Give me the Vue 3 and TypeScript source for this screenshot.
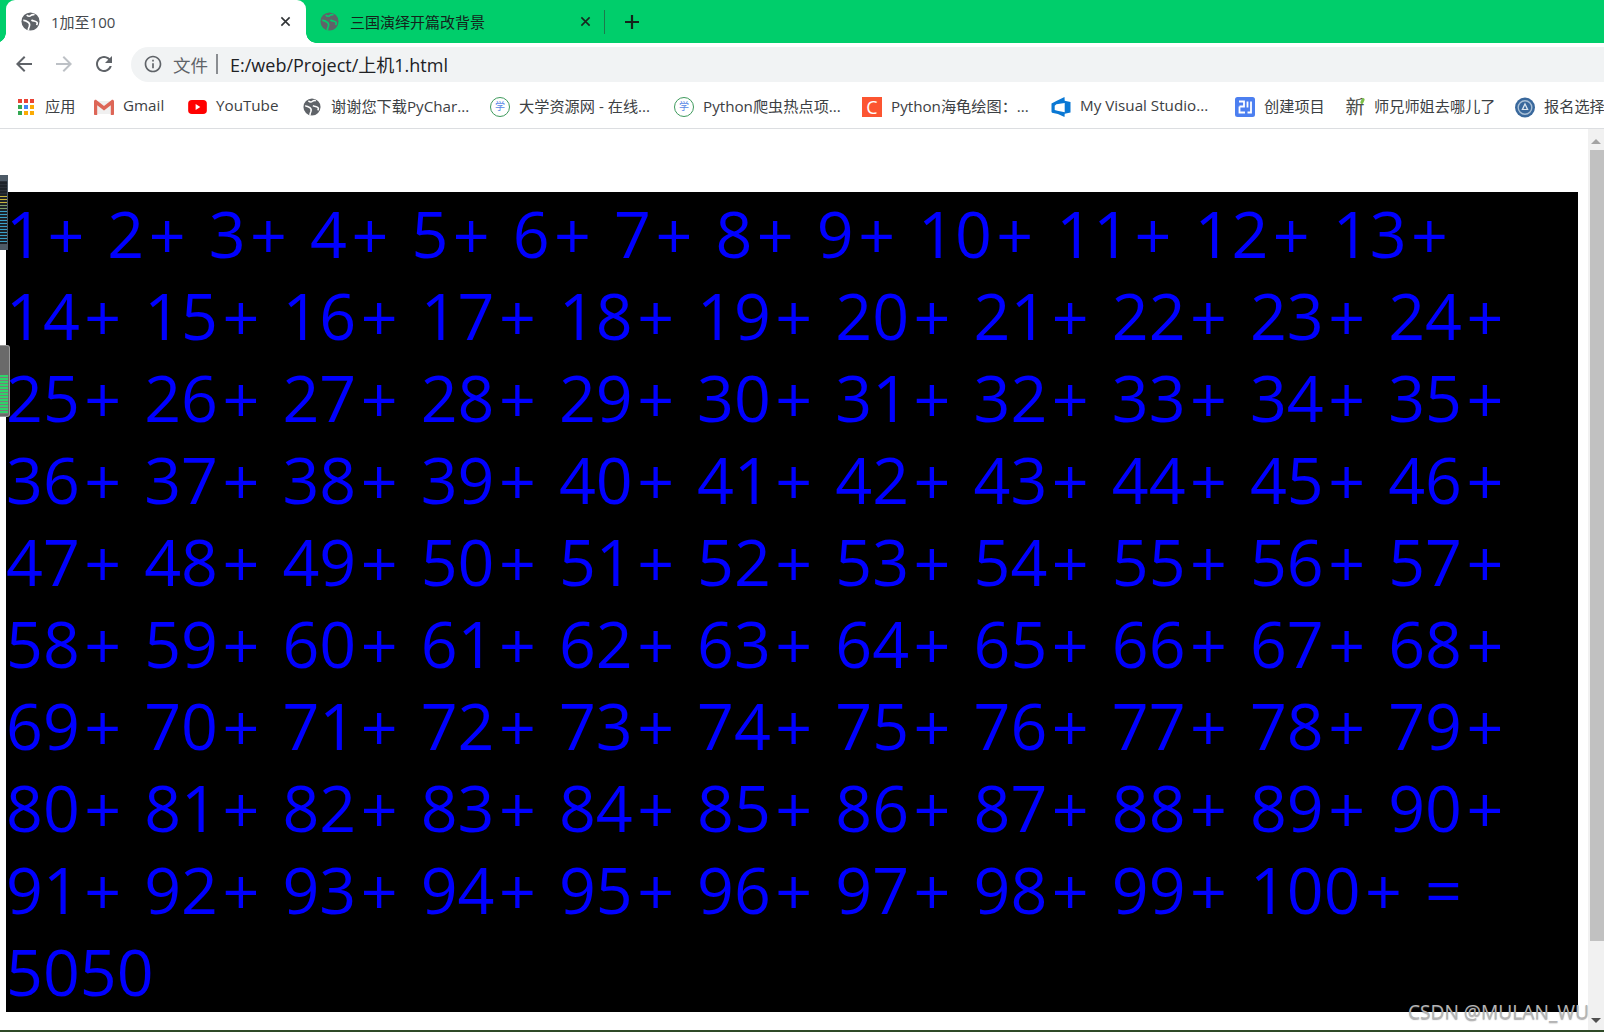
<script setup lang="ts">
import { computed } from 'vue'

interface Bookmark {
  label: string
  icon: string
}

const bookmarks: Bookmark[] = [
  { label: '应用', icon: 'apps' },
  { label: 'Gmail', icon: 'gmail' },
  { label: 'YouTube', icon: 'youtube' },
  { label: '谢谢您下载PyChar...', icon: 'globe' },
  { label: '大学资源网 - 在线...', icon: 'xue' },
  { label: 'Python爬虫热点项...', icon: 'xue' },
  { label: 'Python海龟绘图：...', icon: 'csdn' },
  { label: 'My Visual Studio...', icon: 'vs' },
  { label: '创建项目', icon: 'create' },
  { label: '师兄师姐去哪儿了', icon: 'xin' },
  { label: '报名选择', icon: 'school' },
]

const numbers = Array.from({ length: 100 }, (_, i) => i + 1)
const sum = computed(() => numbers.reduce((a, b) => a + b, 0))

const globePaths = 'M6 3.2C8 5 9.5 4.6 10.5 3.6 11.5 2.8 13 2.6 14.2 3M2.4 8.8C4 8.6 6 9.6 7.6 10.8 9.2 12 9.4 13.4 8.8 15 8.2 16.4 7.6 17.6 7.8 19.2M11 8.4C12.6 9.6 14.6 9.4 16.2 10.4 17.4 11.2 17.2 12.6 16.4 13.8'
</script>

<template>
  <div class="window">
    <header class="tabstrip">
      <div class="tab active">
        <svg class="favicon" viewBox="0 0 20 20"><circle cx="10" cy="10" r="9.5" fill="#5f6368" /><path :d="globePaths" fill="none" stroke="#fff" stroke-width="1.7" /></svg>
        <span class="tab-title">1加至100</span>
        <svg class="close" viewBox="0 0 12 12"><path d="M1.5 1.5l9 9M10.5 1.5l-9 9" stroke="#303336" stroke-width="1.7" /></svg>
      </div>
      <div class="tab idle">
        <svg class="favicon" viewBox="0 0 20 20"><circle cx="10" cy="10" r="9.5" fill="#5f6368" /><path :d="globePaths" fill="none" stroke="#00ce6b" stroke-width="1.7" /></svg>
        <span class="tab-title">三国演绎开篇改背景</span>
        <svg class="close" viewBox="0 0 12 12"><path d="M1.5 1.5l9 9M10.5 1.5l-9 9" stroke="#16281f" stroke-width="1.7" /></svg>
      </div>
      <span class="tab-divider"></span>
      <svg class="new-tab" viewBox="0 0 16 16"><path d="M8 1v14M1 8h14" stroke="#14231b" stroke-width="2.2" /></svg>
    </header>

    <div class="toolbar">
      <svg class="nav" viewBox="0 0 24 24"><path fill="#5f6368" d="M20 11H7.83l5.59-5.59L12 4l-8 8 8 8 1.41-1.41L7.83 13H20v-2z" /></svg>
      <svg class="nav" viewBox="0 0 24 24"><path fill="#bdc1c6" d="M12 4l-1.41 1.41L16.17 11H4v2h12.17l-5.58 5.59L12 20l8-8z" /></svg>
      <svg class="nav" viewBox="0 0 24 24"><path fill="#5f6368" d="M17.65 6.35C16.2 4.9 14.21 4 12 4c-4.42 0-7.99 3.58-7.99 8s3.57 8 7.99 8c3.73 0 6.84-2.55 7.73-6h-2.08c-.82 2.33-3.04 4-5.65 4-3.31 0-6-2.69-6-6s2.69-6 6-6c1.66 0 3.14.69 4.22 1.78L13 11h7V4l-2.35 2.35z" /></svg>
      <div class="omnibox">
        <svg class="info" viewBox="0 0 24 24"><path fill="#5f6368" d="M11 7h2v2h-2zm0 4h2v6h-2zm1-9C6.48 2 2 6.48 2 12s4.48 10 10 10 10-4.48 10-10S17.52 2 12 2zm0 18c-4.41 0-8-3.59-8-8s3.59-8 8-8 8 3.59 8 8-3.59 8-8 8z" /></svg>
        <span class="scheme">文件</span>
        <span class="omni-sep"></span>
        <span class="url">E:/web/Project/上机1.html</span>
      </div>
    </div>

    <nav class="bookmarks">
      <div v-for="b in bookmarks" :key="b.label" class="bookmark">
        <span class="bm-icon">
          <span v-if="b.icon === 'apps'" class="apps">
            <i class="r"></i><i class="r"></i><i class="r"></i>
            <i class="g"></i><i class="b"></i><i class="y"></i>
            <i class="g"></i><i class="y"></i><i class="y"></i>
          </span>
          <svg v-else-if="b.icon === 'gmail'" viewBox="0 0 20 16" width="20" height="16"><path fill="#f0f0f0" d="M1 2h18v13H1z" /><path fill="#dd6657" d="M0 2.5C0 1 1.6.4 2.6 1.2L10 7l7.4-5.8C18.4.4 20 1 20 2.5V15c0 .6-.4 1-1 1h-2.2V6.2L10 11.4 3.2 6.2V16H1c-.6 0-1-.4-1-1z" /></svg>
          <svg v-else-if="b.icon === 'youtube'" viewBox="0 0 20 15" width="19" height="14"><rect width="20" height="15" rx="4" fill="#f00" /><path fill="#fff" d="M8 4.4l5 3.1-5 3.1z" /></svg>
          <svg v-else-if="b.icon === 'globe'" viewBox="0 0 20 20" width="18" height="18"><circle cx="10" cy="10" r="9.5" fill="#5f6368" /><path :d="globePaths" fill="none" stroke="#fff" stroke-width="1.7" /></svg>
          <span v-else-if="b.icon === 'xue'" class="xue">学</span>
          <span v-else-if="b.icon === 'csdn'" class="csdn">C</span>
          <svg v-else-if="b.icon === 'vs'" viewBox="0 0 20 20" width="20" height="20"><path fill="#0a78d4" d="M13.5 0l.2 3.8L19.5 5v10.5l-5.8 1.3-.2 3.2-6.6-3L1 15.8l-.5-1V6.4L5.3 4zM13.7 6L5.4 7.2l-1.7 1.5V13l2.7.8 7.3 1.4z" /></svg>
          <svg v-else-if="b.icon === 'create'" viewBox="0 0 20 20" width="20" height="20"><rect width="20" height="20" rx="2.5" fill="#4c7ff0" /><path fill="none" stroke="#fff" stroke-width="1.8" d="M4 4.5h5v5H4.5M4.5 9.5V15.5H10M16 4.5v11h-3.5M12.5 4.5v6" /></svg>
          <span v-else-if="b.icon === 'xin'" class="xin">新</span>
          <svg v-else viewBox="0 0 20 20" width="21" height="21"><circle cx="10" cy="10" r="10" fill="#39689c" /><circle cx="10" cy="10" r="6.8" fill="none" stroke="#a8bfd6" stroke-width="1.4" /><path fill="#dbe5ee" d="M10 5l3.6 7.5H6.4z" /><path fill="#39689c" d="M10 8l1.6 3.5H8.4z" /></svg>
        </span>
        <span class="bm-label">{{ b.label }}</span>
      </div>
    </nav>

    <div class="viewport">
      <main class="page">
        <div class="result"><template v-for="n in numbers" :key="n">{{ n }}<span class="plus">+</span>{{ ' ' }}</template><span>=</span>{{ ' ' }}<span>{{ sum }}</span></div>
      </main>
      <aside class="scrollbar">
        <span class="arrow up"></span>
        <span class="thumb"></span>
        <span class="arrow down"></span>
      </aside>

      <div class="widget meter">
        <span class="meter-bars"></span>
      </div>
      <div class="widget volume">
        <span class="volume-bars"></span>
      </div>
      <div class="watermark">CSDN @MULAN_WU</div>
    </div>
    <div class="desktop-edge"></div>
  </div>
</template>

<style>
html, body { margin: 0; background: #fff; overflow: hidden; }
</style>

<style scoped>
.window {
  width: 1604px;
  height: 1032px;
  display: flex;
  flex-direction: column;
  overflow: hidden;
  font-family: "Open Sans", "Noto Sans CJK SC", sans-serif;
}
.tabstrip {
  height: 43px;
  flex: none;
  background: #00ce6b;
  display: flex;
  align-items: center;
  padding-left: 6px;
}
.tab {
  width: 300px;
  height: 43px;
  flex: none;
  position: relative;
  display: flex;
  align-items: center;
  box-sizing: border-box;
  padding: 0 15px 0 15px;
}
.tab.active {
  background: #fff;
  border-radius: 9px 9px 0 0;
}
.tab.active::before,
.tab.active::after {
  content: "";
  position: absolute;
  bottom: 0;
  width: 10px;
  height: 10px;
}
.tab.active::before {
  left: -10px;
  background: radial-gradient(circle at 0 0, transparent 9.5px, #fff 10px);
}
.tab.active::after {
  right: -10px;
  background: radial-gradient(circle at 100% 0, transparent 9.5px, #fff 10px);
}
.tab.idle { padding-left: 14px; color: #14231b; }
.favicon { width: 19px; height: 19px; flex: none; margin-right: 11px; }
.tab-title {
  flex: 1;
  font-size: 15px;
  color: #45494d;
  white-space: nowrap;
}
.tab.idle .tab-title { color: #14231b; }
.close { width: 11px; height: 11px; flex: none; }
.tab-divider { width: 1px; height: 24px; background: #1d7a4c; margin-right: 19px; margin-left: -2px; }
.new-tab { width: 16px; height: 16px; flex: none; }

.toolbar {
  height: 45px;
  flex: none;
  display: flex;
  align-items: center;
  box-sizing: border-box;
  padding: 0 0 3px 12px;
  background: #fff;
}
.nav { width: 24px; height: 24px; flex: none; margin-right: 16px; }
.omnibox {
  flex: 1;
  height: 35px;
  margin-left: -1px;
  background: #f1f3f4;
  border-radius: 18px 0 0 18px;
  display: flex;
  align-items: center;
  padding-left: 12px;
}
.info { width: 20px; height: 20px; flex: none; margin-right: 10px; }
.scheme { font-size: 17.5px; color: #5f6368; }
.omni-sep { width: 2px; height: 20px; background: #8a8d91; margin: 0 12px 0 8px; }
.url { font-size: 18px; color: #202124; }

.bookmarks {
  height: 41px;
  flex: none;
  box-sizing: border-box;
  border-bottom: 1px solid #dcdee1;
  background: #fff;
  display: grid;
  grid-template-columns: 78px 93px 115px 188px 184px 188px 189px 184px 110px 170px 1fr;
  padding: 0 0 2px 16px;
  align-items: center;
  overflow: hidden;
}
.bookmark {
  display: flex;
  align-items: center;
  white-space: nowrap;
  overflow: hidden;
  min-width: 0;
}
.bm-icon {
  width: 20px;
  height: 21px;
  flex: none;
  display: flex;
  align-items: center;
  justify-content: center;
  margin-right: 9px;
}
.bm-label { font-size: 15.2px; color: #3c4043; margin-bottom: 4px; }
.apps {
  display: grid;
  grid-template-columns: repeat(3, 4px);
  grid-auto-rows: 4px;
  gap: 2px;
}
.apps i { display: block; }
.apps .r { background: #ea4335; }
.apps .g { background: #34a853; }
.apps .b { background: #4285f4; }
.apps .y { background: #fbab05; }
.xue {
  width: 20px;
  height: 20px;
  box-sizing: border-box;
  border: 1.5px solid #3e9a5c;
  border-radius: 50%;
  color: #5a8ae6;
  font-size: 10px;
  line-height: 17px;
  text-align: center;
}
.csdn {
  width: 20px;
  height: 20px;
  background: #fc5531;
  color: #fff;
  font-size: 18px;
  line-height: 20px;
  text-align: center;
}
.xin {
  font-size: 19px;
  font-weight: 400;
  color: #4b4f4b;
  line-height: 20px;
  position: relative;
}
.xin::after {
  content: "";
  position: absolute;
  right: 1px;
  top: 1px;
  width: 3px;
  height: 6px;
  border-radius: 2px;
  background: #7cbf4a;
  transform: rotate(25deg);
}

.viewport {
  flex: 1;
  min-height: 0;
  display: flex;
  position: relative;
}
.page {
  flex: 1;
  min-width: 0;
  box-sizing: border-box;
  padding: 63px 10px 0 6px;
  background: #fff;
}
.result {
  background: #000;
  color: #00f;
  font-size: 64.5px;
  line-height: 82px;
  height: 820px;
  word-spacing: 6.3px;
  white-space: normal;
}
.plus {
  margin-left: 4.5px;
  line-height: 0;
  vertical-align: -1px;
}
.scrollbar {
  width: 16px;
  flex: none;
  background: #f1f1f1;
  display: flex;
  flex-direction: column;
  align-items: flex-end;
}
.thumb {
  width: 14px;
  height: 791px;
  background: #c1c1c1;
}
.arrow {
  align-self: center;
  width: 0;
  height: 0;
  border-left: 5px solid transparent;
  border-right: 5px solid transparent;
}
.arrow.up { border-bottom: 5px solid #a3a3a3; margin: 10px 0 6px; }
.arrow.down { border-top: 5px solid #505050; margin-top: 77px; }

.widget { position: absolute; left: 0; box-sizing: border-box; }
.meter {
  top: 46px;
  width: 8px;
  height: 75px;
  background: #4d5a66;
  padding: 6px 1px 6px 0;
}
.meter-bars {
  display: block;
  height: 100%;
  background:
    repeating-linear-gradient(#0000 0 1px, #1c2228 1px 3px),
    linear-gradient(#2a2f38 0 24%, #c6b33c 24% 38%, #7f9f6a 38% 48%, #3aa0c8 48%);
}
.volume {
  top: 216px;
  width: 10px;
  height: 72px;
  background: #6a6a6a;
  border: 1px solid #9a9a9a;
  border-left: 0;
  border-radius: 0 3px 3px 0;
  padding-top: 29px;
}
.volume-bars {
  display: block;
  height: 39px;
  width: 8px;
  background: repeating-linear-gradient(#2fd36a 0 2px, #7a7a7a 2px 3px);
}
.watermark {
  position: absolute;
  right: 15px;
  bottom: 6px;
  font-size: 19.2px;
  line-height: 24px;
  color: #b4b4b4;
  text-shadow: 0 1px 1px rgba(90, 90, 90, .5);
  white-space: nowrap;
}
.desktop-edge {
  height: 2px;
  flex: none;
  background: #2f4a28;
}
</style>
